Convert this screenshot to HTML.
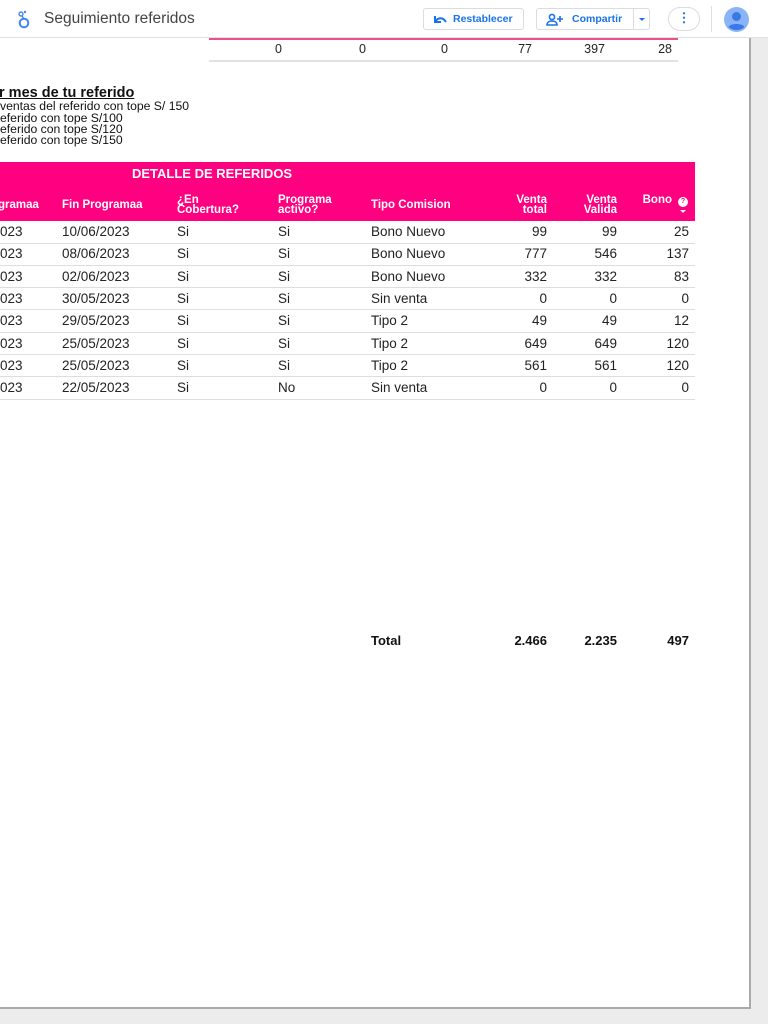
<!DOCTYPE html>
<html><head><meta charset="utf-8"><style>
*{margin:0;padding:0;box-sizing:border-box}
body{width:768px;height:1024px;background:#ececec;font-family:"Liberation Sans",sans-serif;position:relative;overflow:hidden;color:#222}
.page{position:absolute;left:0;top:0;width:751px;height:1009px;background:#fff;border-right:2px solid #aaa;border-bottom:2px solid #aaa}
.hdr{position:absolute;left:0;top:0;width:768px;height:38px;background:#fff;border-bottom:1px solid #e0e0e0}
.a{position:absolute;white-space:nowrap}
.r{position:absolute;white-space:nowrap;text-align:right}
.btn{position:absolute;top:8px;height:22px;border:1px solid #dadce0;border-radius:3px;color:#1a73e8;font-size:10.5px;font-weight:bold;line-height:20px}
.cell{font-size:13.5px;color:#222}
.th{font-size:11.5px;font-weight:bold;color:#fff;line-height:10px}
.line{position:absolute;left:0;width:695px;height:1px;background:#ddd}
.clip{position:absolute;left:0;top:0;width:751px;height:1009px;overflow:hidden}
</style></head><body>
<div class="page"></div>
<div class="hdr">
 <svg class="a" style="left:17px;top:9px" width="14" height="20" viewBox="0 0 14 20"><circle cx="7" cy="14" r="4.3" fill="none" stroke="#4285f4" stroke-width="2"/><circle cx="4" cy="5" r="2" fill="none" stroke="#4285f4" stroke-width="1.4"/><circle cx="8" cy="3" r="1.2" fill="#4285f4"/><path d="M5 7 L7 10" stroke="#4285f4" stroke-width="1.4"/></svg>
 <div class="a" style="left:44px;top:10px;font-size:15.5px;color:#444">Seguimiento referidos</div>
 <div class="btn" style="left:423px;width:101px"><svg class="a" style="left:9px;top:5px" width="14" height="10" viewBox="0 0 14 10"><path d="M2 2v6h6M2 8C5 3 10 3 13 8" fill="none" stroke="#1a73e8" stroke-width="2"/></svg><span class="a" style="left:29px;top:0">Restablecer</span></div>
 <div class="btn" style="left:536px;width:114px"><svg class="a" style="left:9px;top:4px" width="18" height="13" viewBox="0 0 18 13"><circle cx="6" cy="4" r="2.6" fill="none" stroke="#1a73e8" stroke-width="1.6"/><path d="M1 12c0-3 2.5-4 5-4s5 1 5 4z" fill="none" stroke="#1a73e8" stroke-width="1.6"/><path d="M14 3v6M11 6h6" stroke="#1a73e8" stroke-width="1.6"/></svg><span class="a" style="left:35px;top:0">Compartir</span><div class="a" style="left:96px;top:0;width:1px;height:20px;background:#dadce0"></div><div class="a" style="left:102px;top:9px;border:3px solid transparent;border-top:3px solid #1a73e8"></div></div>
 <div class="a" style="left:668px;top:7px;width:32px;height:24px;border:1px solid #dadce0;border-radius:12px;text-align:center;color:#1a73e8;font-weight:bold;font-size:13px;line-height:20px">⋮</div>
 <div class="a" style="left:711px;top:6px;width:1px;height:26px;background:#e0e0e0"></div>
 <svg class="a" style="left:724px;top:7px" width="25" height="25" viewBox="0 0 25 25"><circle cx="12.5" cy="12.5" r="12.5" fill="#8ab4f8"/><circle cx="12.5" cy="9.5" r="4.5" fill="#3b78e7"/><path d="M4.5 20c2-4 14-4 16 0a12 12 0 0 1-16 0z" fill="#3b78e7"/></svg>
</div>
<div class="clip">
<div class="a" style="left:209px;top:38px;width:469px;height:2px;background:#e8508f"></div>
<div class="a" style="left:209px;top:60px;width:469px;height:2px;background:#e2e2e2"></div>
<div class="r cell" style="right:469px;top:42px;font-size:12.5px">0</div>
<div class="r cell" style="right:385px;top:42px;font-size:12.5px">0</div>
<div class="r cell" style="right:303px;top:42px;font-size:12.5px">0</div>
<div class="r cell" style="right:219px;top:42px;font-size:12.5px">77</div>
<div class="r cell" style="right:146px;top:42px;font-size:12.5px">397</div>
<div class="r cell" style="right:79px;top:42px;font-size:12.5px">28</div>

<div class="a" style="left:-1px;top:85px;font-size:14.5px;font-weight:bold;text-decoration:underline;color:#111">r mes de tu referido</div>
<div class="a" style="left:0;top:99px;font-size:12.2px;color:#111">ventas del referido con tope S/ 150</div>
<div class="a" style="left:0;top:111px;font-size:12.2px;color:#111">eferido con tope S/100</div>
<div class="a" style="left:0;top:122px;font-size:12.2px;color:#111">eferido con tope S/120</div>
<div class="a" style="left:0;top:133px;font-size:12.2px;color:#111">eferido con tope S/150</div>

<div class="a" style="left:0;top:162px;width:695px;height:59px;background:#ff0080"></div>
<div class="a" style="left:132px;top:166px;font-size:13px;font-weight:bold;color:#fff">DETALLE DE REFERIDOS</div>
<div class="a th" style="left:-2px;top:200px">gramaa</div>
<div class="a th" style="left:62px;top:200px">Fin Programaa</div>
<div class="a th" style="left:177px;top:195px">¿En<br>Cobertura?</div>
<div class="a th" style="left:278px;top:195px">Programa<br>activo?</div>
<div class="a th" style="left:371px;top:200px">Tipo Comision</div>
<div class="r th" style="right:204px;top:195px">Venta<br>total</div>
<div class="r th" style="right:134px;top:195px">Venta<br>Valida</div>
<div class="r th" style="right:79px;top:195px">Bono</div>
<div class="a" style="left:678px;top:197px;width:10px;height:10px;border-radius:5px;background:#fff;color:#ff0080;font-size:7px;font-weight:bold;text-align:center;line-height:10px">?</div>
<div class="a" style="left:680px;top:210px;border:3px solid transparent;border-top:3px solid #fff"></div>

<div id="rows"></div>
<div class="a" style="left:371px;top:633px;font-size:13px;font-weight:bold;color:#111">Total</div>
<div class="r" style="right:204px;top:633px;font-size:13px;font-weight:bold;color:#111">2.466</div>
<div class="r" style="right:134px;top:633px;font-size:13px;font-weight:bold;color:#111">2.235</div>
<div class="r" style="right:62px;top:633px;font-size:13px;font-weight:bold;color:#111">497</div>
</div>
<script>
var d=[["10/06/2023","Si","Si","Bono Nuevo",99,99,25],["08/06/2023","Si","Si","Bono Nuevo",777,546,137],["02/06/2023","Si","Si","Bono Nuevo",332,332,83],["30/05/2023","Si","Si","Sin venta",0,0,0],["29/05/2023","Si","Si","Tipo 2",49,49,12],["25/05/2023","Si","Si","Tipo 2",649,649,120],["25/05/2023","Si","Si","Tipo 2",561,561,120],["22/05/2023","Si","No","Sin venta",0,0,0]];
var h="";
d.forEach(function(r,i){var y=221+i*22.3;var t=y+3;
h+='<div class="a cell" style="left:0;top:'+t+'px">023</div>';
h+='<div class="a cell" style="left:62px;top:'+t+'px">'+r[0]+'</div>';
h+='<div class="a cell" style="left:177px;top:'+t+'px">'+r[1]+'</div>';
h+='<div class="a cell" style="left:278px;top:'+t+'px">'+r[2]+'</div>';
h+='<div class="a cell" style="left:371px;top:'+t+'px">'+r[3]+'</div>';
h+='<div class="r cell" style="right:204px;top:'+t+'px">'+r[4]+'</div>';
h+='<div class="r cell" style="right:134px;top:'+t+'px">'+r[5]+'</div>';
h+='<div class="r cell" style="right:62px;top:'+t+'px">'+r[6]+'</div>';
h+='<div class="line" style="top:'+(y+21.5)+'px"></div>';});
document.getElementById("rows").innerHTML=h;
</script>
</body></html>
